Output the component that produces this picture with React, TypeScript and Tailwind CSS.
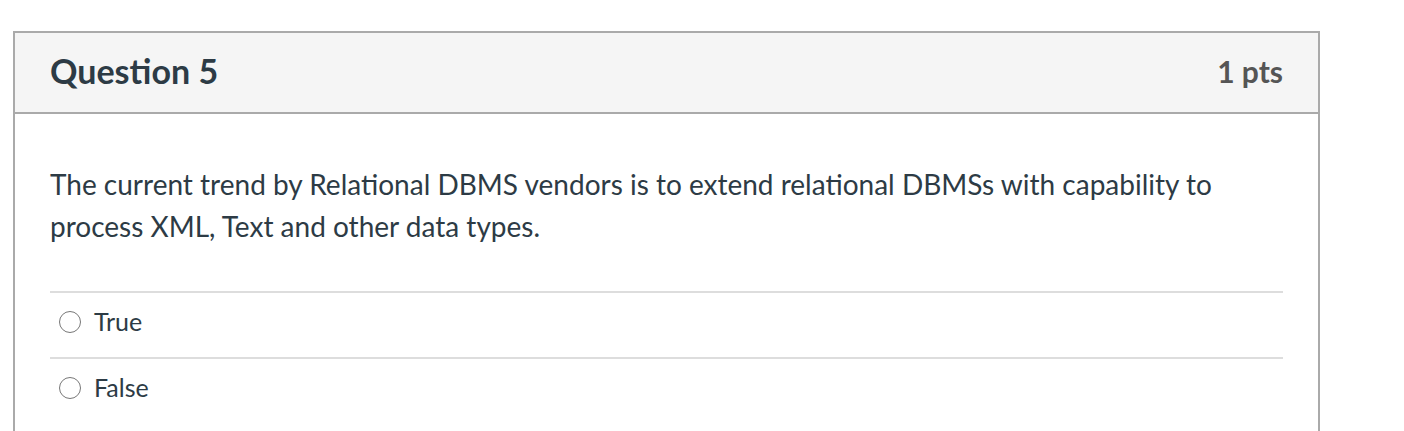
const answers = ['True', 'False'];

export default function App() {
  return (
    <div className="min-h-screen bg-white pl-[13px] pt-[31px] font-['Lato','Liberation_Sans',sans-serif]">
      <div className="w-[1307px] border-2 border-[#aaaaaa]">
        <div className="flex h-[81px] items-center justify-between border-b-2 border-[#aaaaaa] bg-[#f5f5f5] px-[35px] pb-[3px]">
          <h2 className="text-[34px] font-bold leading-none text-[#2d3b45]">Question 5</h2>
          <span className="text-[30px] font-bold leading-none text-[#555555]">1 pts</span>
        </div>
        <div className="px-[35px] pb-[40px] pt-[49px]">
          <p className="text-[28px] leading-[42px] text-[#2d3b45]">
            The current trend by Relational DBMS vendors is to extend relational DBMSs with capability to process XML, Text and
            other data types.
          </p>
          <div className="mt-[44px]">
            {answers.map((a) => (
              <label key={a} className="flex h-[66px] items-center gap-[13px] border-t-2 border-[#dddddd] pb-[6px] pl-[9px]">
                <span className="h-[22px] w-[22px] rounded-full border-[1.5px] border-[#777777] bg-white" />
                <span className="text-[25px] text-[#2d3b45]">{a}</span>
              </label>
            ))}
          </div>
        </div>
      </div>
    </div>
  );
}
